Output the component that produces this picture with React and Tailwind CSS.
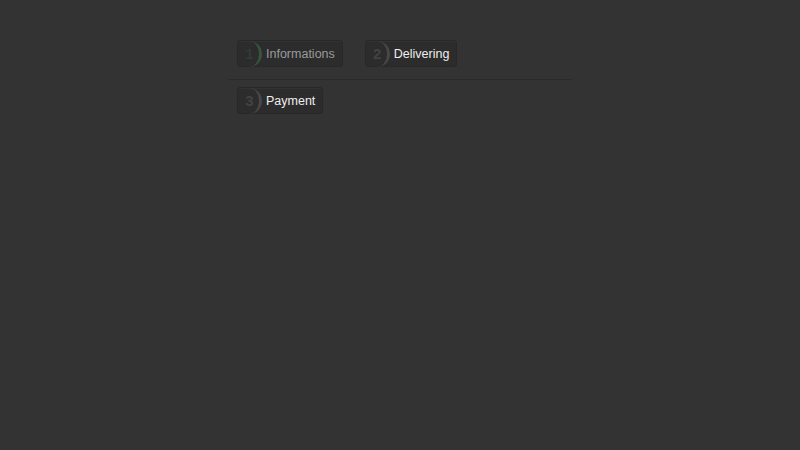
import React from 'react';

const steps = [
  { n: 1, label: 'Informations', done: true },
  { n: 2, label: 'Delivering' },
  { n: 3, label: 'Payment' },
];

const Step = ({ n, label, done }) => (
  <div className="flex items-center h-[27px] rounded-[3px] border border-[#282828] bg-[#2c2c2c] shadow-[inset_0_1px_0_rgba(255,255,255,0.03)] pr-[7px]">
    <span
      className={
        'flex items-center justify-center w-[24px] h-[26px] mr-[4px] pl-[2px] pt-px rounded-r-full border-r-[3px] text-[15px] font-bold ' +
        (done ? 'border-[#37543c] text-[#2f3d32]' : 'border-[#474747] text-[#424242]')
      }
    >
      {n}
    </span>
    <span className={'pt-[2px] text-[12.5px] ' + (done ? 'text-[#9a9a9a]' : 'text-[#eeeeee]')}>{label}</span>
  </div>
);

export default function App() {
  return (
    <div className="min-h-screen bg-[#333333] font-['Liberation_Sans',Arial,sans-serif]">
      <div className="w-[344px] mx-auto pt-[40px]">
        <div className="flex gap-[22px] px-[9px] pb-[12px] border-b border-[#2a2a2a]">
          <Step {...steps[0]} />
          <Step {...steps[1]} />
        </div>
        <div className="flex px-[9px] pt-[7px]">
          <Step {...steps[2]} />
        </div>
      </div>
    </div>
  );
}
